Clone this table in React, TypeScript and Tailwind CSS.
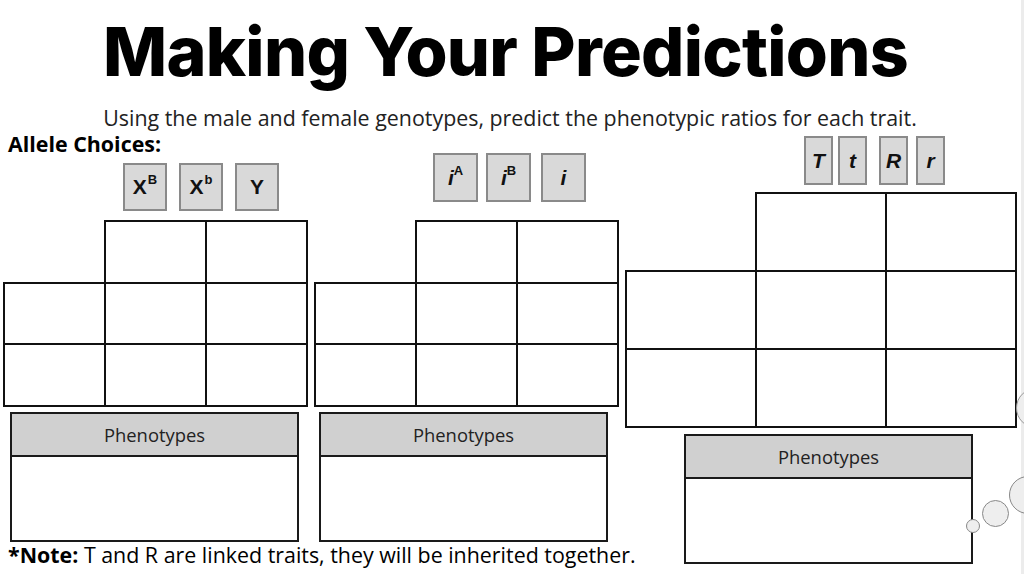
import { ReactNode } from "react";

const body = "font-['Open_Sans','Liberation_Sans',sans-serif]";

function Chip({ children, className }: { children: ReactNode; className: string }) {
  return (
    <div
      className={`flex items-center justify-center bg-[#d9d9d9] border-2 border-[#8a8a8a] font-['Liberation_Sans',Arial,sans-serif] font-bold text-[21px] text-[#111] ${className}`}
    >
      {children}
    </div>
  );
}

function Punnett({ cellW, rowH }: { cellW: string; rowH: string[] }) {
  return (
    <table className="border-collapse">
      <tbody>
        {rowH.map((h, r) => (
          <tr key={r} className={h}>
            {[0, 1, 2].map((c) => (
              <td
                key={c}
                className={`${cellW} p-0 ${r === 0 && c === 0 ? "border-0" : "border-2 border-[#111]"}`}
              />
            ))}
          </tr>
        ))}
      </tbody>
    </table>
  );
}

function Phenotypes({ className }: { className: string }) {
  return (
    <div className={`border-2 border-[#1a1a1a] flex flex-col ${className}`}>
      <div className={`h-[43px] bg-[#d0d0d0] border-b-2 border-[#1a1a1a] flex items-center justify-center text-[18.4px] text-[#222] ${body}`}>
        Phenotypes
      </div>
      <div className="flex-1 bg-white" />
    </div>
  );
}

export default function App() {
  return (
    <div className="relative w-[1024px] h-[574px] overflow-hidden bg-white text-black">
      <h1 className="pt-[11px] h-[104px] pr-[13px] text-center font-['Inter',sans-serif] font-extrabold text-[68px] leading-[80px] tracking-[-0.7px]">
        Making Your Predictions
      </h1>
      <p className={`text-center pr-[4px] text-[21.4px] leading-[28px] text-[#222] ${body}`}>
        Using the male and female genotypes, predict the phenotypic ratios for each trait.
      </p>

      <div className="flex">
        <div className="w-[626px] shrink-0 flex flex-col">
          <div className="flex">
            {/* sex-linked trait */}
            <div className="w-[315px] flex flex-col">
              <div className={`pl-[8px] text-[21.4px] leading-[24px] font-bold ${body}`}>Allele Choices:</div>
              <div className="flex gap-[12px] ml-[123px] mt-[7px]">
                <Chip className="w-[44px] h-[48px]">X<sup className="text-[13px] -top-[7px] ml-[1px]">B</sup></Chip>
                <Chip className="w-[44px] h-[48px]">X<sup className="text-[13px] -top-[7px] ml-[1px]">b</sup></Chip>
                <Chip className="w-[44px] h-[48px]">Y</Chip>
              </div>
              <div className="ml-[3px] mt-[9px]">
                <Punnett cellW="w-[101px]" rowH={["h-[62px]", "h-[61px]", "h-[62px]"]} />
              </div>
              <Phenotypes className="ml-[10px] mt-[5px] w-[289px] h-[130px]" />
            </div>

            {/* blood type */}
            <div className="w-[311px] flex flex-col">
              <div className="flex ml-[118px] mt-[21px]">
                <Chip className="w-[45px] h-[49px]"><i>i</i><sup className="text-[13px] -top-[7px] not-italic">A</sup></Chip>
                <Chip className="w-[45px] h-[49px] ml-[8px]"><i>i</i><sup className="text-[13px] -top-[7px] not-italic">B</sup></Chip>
                <Chip className="w-[45px] h-[49px] ml-[10px]"><i>i</i></Chip>
              </div>
              <div className="mt-[18px] -ml-[1px]">
                <Punnett cellW="w-[101px]" rowH={["h-[62px]", "h-[61px]", "h-[62px]"]} />
              </div>
              <Phenotypes className="ml-[4px] mt-[5px] w-[289px] h-[130px]" />
            </div>
          </div>
          <p className={`pl-[8px] whitespace-nowrap text-[21.4px] leading-[26px] ${body}`}>
            <b>*Note:</b> T and R are linked traits, they will be inherited together.
          </p>
        </div>

        {/* linked traits */}
        <div className="flex flex-col">
          <div className="flex ml-[178px] mt-[4px] italic">
            <Chip className="w-[29px] h-[49px]">T</Chip>
            <Chip className="w-[29px] h-[49px] ml-[5px]">t</Chip>
            <Chip className="w-[29px] h-[49px] ml-[12px]">R</Chip>
            <Chip className="w-[29px] h-[49px] ml-[8px]">r</Chip>
          </div>
          <div className="mt-[7px] -ml-[1px]">
            <Punnett cellW="w-[130px]" rowH={["h-[78px]", "h-[78px]", "h-[78px]"]} />
          </div>
          <Phenotypes className="ml-[58px] mt-[6px] w-[289px] h-[130px]" />
        </div>
      </div>

      {/* slide edge and thought bubbles */}
      <div className="absolute top-0 right-0 w-[3px] h-full bg-[#ececec]" />
      <div className="absolute left-[1016px] top-[388px] w-[40px] h-[40px] rounded-full border border-[#999] bg-[#eee]" />
      <div className="absolute left-[1009px] top-[476px] w-[38px] h-[38px] rounded-full border border-[#888] bg-[#eee]" />
      <div className="absolute left-[982px] top-[500px] w-[27px] h-[27px] rounded-full border border-[#888] bg-[#eee]" />
      <div className="absolute left-[966px] top-[519px] w-[14px] h-[14px] rounded-full border border-[#888] bg-[#eee]" />
    </div>
  );
}
